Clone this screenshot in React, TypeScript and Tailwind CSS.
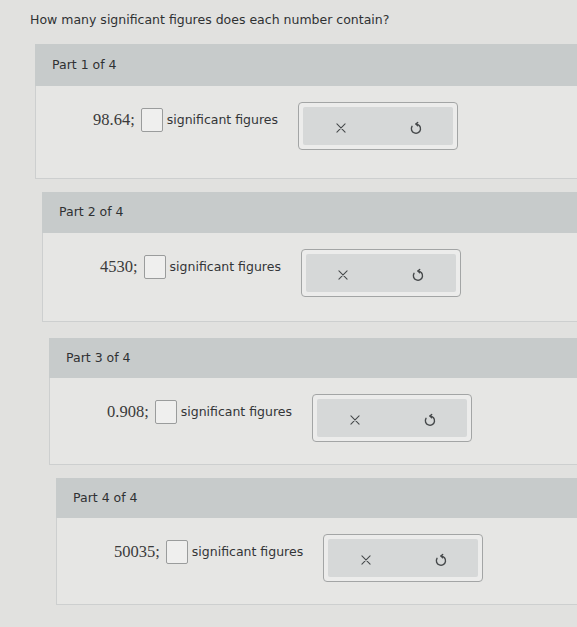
import type { CSSProperties } from 'react'

interface Part {
  value: string
  indent: string
  header: string
  body: string
  gap: string
}

const PARTS: Part[] = [
  { value: '98.64', indent: 'ml-[35px]', header: 'h-[42px]', body: 'h-[93px]', gap: 'mb-[13px]' },
  { value: '4530', indent: 'ml-[42px]', header: 'h-[41px]', body: 'h-[89px]', gap: 'mb-[16px]' },
  { value: '0.908', indent: 'ml-[49px]', header: 'h-[40px]', body: 'h-[87px]', gap: 'mb-[13px]' },
  { value: '50035', indent: 'ml-[56px]', header: 'h-[40px]', body: 'h-[87px]', gap: 'mb-0' },
]

const sans: CSSProperties = { fontFamily: '"DejaVu Sans", Verdana, sans-serif' }
const serif: CSSProperties = { fontFamily: '"Liberation Serif", "Times New Roman", serif' }

function UndoIcon() {
  return (
    <svg viewBox="0 0 24 24" fill="none" stroke="currentColor" strokeWidth={1.7} strokeLinecap="round" strokeLinejoin="round" className="mt-[2px] h-[20px] w-[20px]">
      <path d="M12 8.5A5.5 5.5 0 1 1 7.2 11.2" />
      <path d="M14 6.5 12 8.5l2 2" />
    </svg>
  )
}

function ActionBox() {
  return (
    <div className="h-[48px] w-[160px] shrink-0 rounded-[4px] border border-[#a3a5a5] bg-[#ececeb] p-[4px]">
      <div className="grid h-full grid-cols-2 items-center rounded-[2px] bg-[#d6d8d8] text-[#45484a]">
        <div className="flex justify-center">
          <svg viewBox="0 0 24 24" fill="none" stroke="currentColor" strokeWidth={1.8} strokeLinecap="round" className="mt-[3px] h-[14px] w-[14px]">
            <path d="M5 5l14 14M19 5 5 19" />
          </svg>
        </div>
        <div className="flex justify-center">
          <UndoIcon />
        </div>
      </div>
    </div>
  )
}

function PartCard({ part, index }: { part: Part; index: number }) {
  return (
    <div className={`${part.indent} ${part.gap}`}>
      <div className={`flex ${part.header} items-center bg-[#c7cbcb] pl-[17px] text-[12.5px] text-[#2f3133]`} style={sans}>
        Part {index + 1} of 4
      </div>
      <div className={`${part.body} border-b border-l border-[#cdcfcf] bg-[#e6e6e4] pl-[57px] pt-[16px]`}>
        <div className="flex items-start">
          <div className="mt-[6px] flex h-[24px] items-center">
            <span className="text-[16.5px] text-[#3a3a3a]" style={serif}>
              {part.value};
            </span>
            <span className="ml-[6px] h-[24px] w-[22px] rounded-[2px] border border-[#9a9c9c] bg-[#efefee]" />
            <span className="ml-[4px] text-[12.5px] text-[#333537]" style={sans}>
              significant figures
            </span>
          </div>
          <div className="ml-[20px]">
            <ActionBox />
          </div>
        </div>
      </div>
    </div>
  )
}

export default function App() {
  return (
    <div className="min-h-[627px] w-[577px] overflow-hidden bg-[#e1e1df]">
      <div className="h-[44px] pl-[30px] pt-[11px] text-[12.5px] text-[#2f3133]" style={sans}>
        How many significant figures does each number contain?
      </div>
      {PARTS.map((p, i) => (
        <PartCard key={p.value} part={p} index={i} />
      ))}
    </div>
  )
}
